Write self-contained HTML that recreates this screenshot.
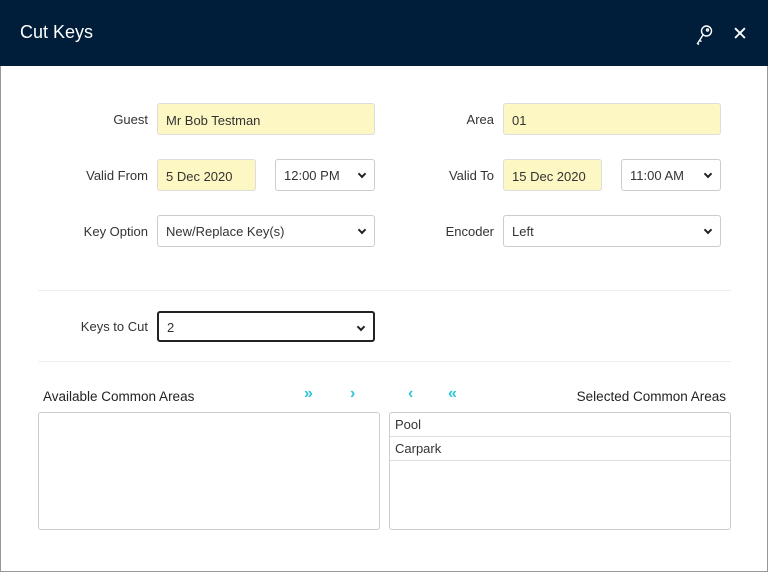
<!DOCTYPE html>
<html><head><style>
*{box-sizing:border-box;margin:0;padding:0}
body{width:768px;height:572px;background:#fff;font-family:"Liberation Sans",sans-serif;font-size:13px;color:#333;position:relative;overflow:hidden}
.hdr{position:absolute;left:0;top:0;width:768px;height:66px;background:#001d3a;color:#fff}
.frame{position:absolute;left:0;top:66px;width:768px;height:506px;border:1px solid #999;border-top:none}
.a{position:absolute}
.lbl{position:absolute;text-align:right;width:120px;line-height:34px}
.in{position:absolute;height:32px;border:1px solid #ddd;border-radius:3px;background:#fdf7c3;padding-left:8px;line-height:34px}
.sel{position:absolute;height:32px;border:1px solid #ccc;border-radius:3px;background:#fff;padding-left:8px;line-height:32px}
.sel:after{content:"";position:absolute;right:9px;top:11px;width:4px;height:4px;border-right:2px solid #222;border-bottom:2px solid #222;transform:rotate(45deg)}
.hr{position:absolute;left:38px;width:693px;height:1px;background:#eee}
.box{position:absolute;top:412px;height:118px;border:1px solid #ccc;border-radius:3px}
.row{height:24px;line-height:24px;padding-left:5px;border-bottom:1px solid #ddd}
.ar{position:absolute;top:385px;color:#2cc6d6;font-size:16px;font-weight:bold}
.h{position:absolute;top:389px;color:#222;font-size:13.5px}
</style></head><body>
<div class="hdr">
<div class="a" style="left:20px;top:22px;font-size:18px">Cut Keys</div>
<svg class="a" style="left:694px;top:24px" width="20" height="22" viewBox="0 0 20 22" fill="none" stroke="#fff" stroke-width="1.4"><circle cx="12.5" cy="7" r="5"/><circle cx="13.5" cy="6" r="1"/><path d="M9 11 L3.5 19.5 L5 20.5 M5.5 16.5 L7.5 17.5"/></svg>
<div class="a" style="left:732px;top:23px;font-size:19px">✕</div>
</div>
<div class="frame"></div>
<div class="lbl" style="left:28px;top:103px">Guest</div>
<div class="in" style="left:157px;top:103px;width:218px">Mr Bob Testman</div>
<div class="lbl" style="left:374px;top:103px">Area</div>
<div class="in" style="left:503px;top:103px;width:218px">01</div>
<div class="lbl" style="left:28px;top:159px">Valid From</div>
<div class="in" style="left:157px;top:159px;width:99px">5 Dec 2020</div>
<div class="sel" style="left:275px;top:159px;width:100px">12:00 PM</div>
<div class="lbl" style="left:374px;top:159px">Valid To</div>
<div class="in" style="left:503px;top:159px;width:99px">15 Dec 2020</div>
<div class="sel" style="left:621px;top:159px;width:100px">11:00 AM</div>
<div class="lbl" style="left:28px;top:215px">Key Option</div>
<div class="sel" style="left:157px;top:215px;width:218px">New/Replace Key(s)</div>
<div class="lbl" style="left:374px;top:215px">Encoder</div>
<div class="sel" style="left:503px;top:215px;width:218px">Left</div>
<div class="hr" style="top:290px"></div>
<div class="lbl" style="left:28px;top:310px">Keys to Cut</div>
<div class="sel" style="left:157px;top:311px;width:218px;height:31px;border:2px solid #222;line-height:29px">2</div>
<div class="hr" style="top:361px"></div>
<div class="h" style="left:43px">Available Common Areas</div>
<div class="h" style="left:576px;width:150px;text-align:right">Selected Common Areas</div>
<div class="ar" style="left:304px">»</div>
<div class="ar" style="left:350px">›</div>
<div class="ar" style="left:408px">‹</div>
<div class="ar" style="left:448px">«</div>
<div class="box" style="left:38px;width:342px"></div>
<div class="box" style="left:389px;width:342px"><div class="row">Pool</div><div class="row">Carpark</div></div>
</body></html>
